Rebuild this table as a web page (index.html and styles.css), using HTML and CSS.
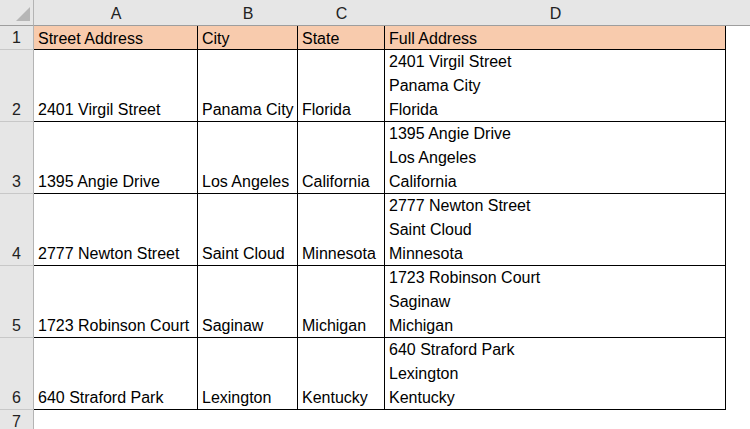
FILE: index.html
```html
<!DOCTYPE html>
<html>
<head>
<meta charset="utf-8">
<link rel="stylesheet" href="styles.css">
</head>
<body>
<div class="sheet">
  <div class="corner"><div class="tri"></div></div>
  <div class="colhdr">A</div>
  <div class="colhdr">B</div>
  <div class="colhdr">C</div>
  <div class="colhdr">D</div>
  <div class="colhdr last"></div>

  <div class="rowhdr"><div class="ln">1</div></div>
  <div class="cell head"><div class="ln">Street Address</div></div>
  <div class="cell head"><div class="ln">City</div></div>
  <div class="cell head"><div class="ln">State</div></div>
  <div class="cell head"><div class="ln">Full Address</div></div>
  <div class="cell blank"></div>

  <div class="rowhdr"><div class="ln">2</div></div>
  <div class="cell"><div class="ln">2401 Virgil Street</div></div>
  <div class="cell"><div class="ln">Panama City</div></div>
  <div class="cell"><div class="ln">Florida</div></div>
  <div class="cell"><div class="ln">2401 Virgil Street</div><div class="ln">Panama City</div><div class="ln">Florida</div></div>
  <div class="cell blank"></div>

  <div class="rowhdr"><div class="ln">3</div></div>
  <div class="cell"><div class="ln">1395 Angie Drive</div></div>
  <div class="cell"><div class="ln">Los Angeles</div></div>
  <div class="cell"><div class="ln">California</div></div>
  <div class="cell"><div class="ln">1395 Angie Drive</div><div class="ln">Los Angeles</div><div class="ln">California</div></div>
  <div class="cell blank"></div>

  <div class="rowhdr"><div class="ln">4</div></div>
  <div class="cell"><div class="ln">2777 Newton Street</div></div>
  <div class="cell"><div class="ln">Saint Cloud</div></div>
  <div class="cell"><div class="ln">Minnesota</div></div>
  <div class="cell"><div class="ln">2777 Newton Street</div><div class="ln">Saint Cloud</div><div class="ln">Minnesota</div></div>
  <div class="cell blank"></div>

  <div class="rowhdr"><div class="ln">5</div></div>
  <div class="cell"><div class="ln">1723 Robinson Court</div></div>
  <div class="cell"><div class="ln">Saginaw</div></div>
  <div class="cell"><div class="ln">Michigan</div></div>
  <div class="cell"><div class="ln">1723 Robinson Court</div><div class="ln">Saginaw</div><div class="ln">Michigan</div></div>
  <div class="cell blank"></div>

  <div class="rowhdr"><div class="ln">6</div></div>
  <div class="cell"><div class="ln">640 Straford Park</div></div>
  <div class="cell"><div class="ln">Lexington</div></div>
  <div class="cell"><div class="ln">Kentucky</div></div>
  <div class="cell"><div class="ln">640 Straford Park</div><div class="ln">Lexington</div><div class="ln">Kentucky</div></div>
  <div class="cell blank"></div>

  <div class="rowhdr"><div class="ln">7</div></div>
  <div class="cell empty"></div>
  <div class="cell empty"></div>
  <div class="cell empty"></div>
  <div class="cell empty"></div>
  <div class="cell empty"></div>
</div>
</body>
</html>
```

FILE: styles.css
```css
html, body {
  margin: 0;
  padding: 0;
  background: #ffffff;
}
body {
  width: 750px;
  height: 429px;
  overflow: hidden;
  font-family: "Liberation Sans", Arial, sans-serif;
  font-size: 16px;
  color: #000;
}
.sheet {
  display: grid;
  grid-template-columns: 34px 164px 100px 87px 341px 24px;
  grid-template-rows: 26px 24px 72px 72px 72px 72px 72px 24px;
}
.corner {
  background: #e6e6e6;
  border-right: 1px solid #b4b4b4;
  border-bottom: 1px solid #9e9e9e;
  position: relative;
}
.tri {
  position: absolute;
  left: 16px;
  top: 7px;
  width: 0;
  height: 0;
  border-left: 14px solid transparent;
  border-bottom: 14px solid #b6b6b6;
}
.colhdr {
  background: #e6e6e6;
  border-bottom: 1px solid #9e9e9e;
  display: flex;
  align-items: center;
  justify-content: center;
  padding-top: 2px;
  color: #222;
  position: relative;
}
.colhdr::after {
  content: "";
  position: absolute;
  right: -1px;
  top: 3px;
  bottom: 0;
  width: 1px;
  background: #b4b4b4;
}
.colhdr.last::after {
  display: none;
}
.rowhdr {
  background: #e6e6e6;
  border-right: 1px solid #b4b4b4;
  border-bottom: 1px solid #c8c8c8;
  display: flex;
  flex-direction: column;
  align-items: center;
  justify-content: flex-end;
  line-height: 24px;
  color: #222;
}
.cell {
  border-right: 1px solid #000;
  border-bottom: 1px solid #000;
  display: flex;
  flex-direction: column;
  justify-content: flex-end;
  padding-left: 4px;
  line-height: 24px;
  white-space: nowrap;
}
.ln:last-child {
  margin-bottom: -1px;
}
.cell.head {
  background: #f8cbad;
}
.cell.head .ln {
  line-height: 23px;
}
.cell.blank,
.cell.empty {
  border-right: none;
  border-bottom: none;
}
```
